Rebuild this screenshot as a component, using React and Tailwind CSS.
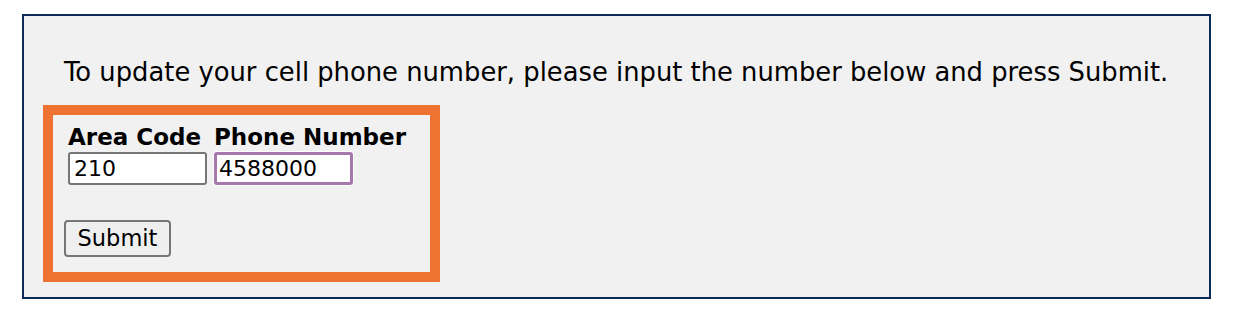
export default function App() {
  return (
    <div className="w-[1250px] h-[326px] bg-white pt-[14px] pl-[22px]" style={{ fontFamily: '"DejaVu Sans", Verdana, sans-serif' }}>
      <div className="w-[1189px] h-[285px] border-2 border-[#0c2b5b] bg-[#f1f1f1] pl-[19px] pt-[41px]">
        <p className="pl-[21px] text-[25.8px] leading-[30px] text-black whitespace-nowrap">
          To update your cell phone number, please input the number below and press Submit.
        </p>
        <div className="mt-[18px] w-[397px] h-[177px] border-[10px] border-[#ee7231] flex flex-col">
          <div className="flex gap-[7px] pl-[15px] pt-[9px]">
            <div className="flex flex-col w-[139px]">
              <span className="text-[23px] font-bold leading-[26px] text-black whitespace-nowrap">Area Code</span>
              <input
                type="text"
                defaultValue="210"
                className="mt-[2px] h-[33px] w-[139px] rounded-[3px] border-2 border-[#767676] bg-white px-[4px] text-[22px] text-black outline-none"
                style={{ fontFamily: '"DejaVu Sans", Verdana, sans-serif' }}
              />
            </div>
            <div className="flex flex-col">
              <span className="text-[23px] font-bold leading-[26px] text-black whitespace-nowrap">Phone Number</span>
              <input
                type="text"
                defaultValue="4588000"
                className="mt-[2px] h-[33px] w-[139px] rounded-[3px] border-[3px] border-[#a678ad] bg-white px-[2px] text-[22px] text-black outline-none ring-1 ring-white"
                style={{ fontFamily: '"DejaVu Sans", Verdana, sans-serif' }}
              />
            </div>
          </div>
          <div className="pl-[11px] mt-[35px]">
            <button
              type="button"
              className="h-[37px] w-[107px] rounded-[4px] border-2 border-[#767676] bg-[#efefef] text-[22.5px] text-black"
              style={{ fontFamily: '"DejaVu Sans", Verdana, sans-serif' }}
            >
              Submit
            </button>
          </div>
        </div>
      </div>
    </div>
  );
}
